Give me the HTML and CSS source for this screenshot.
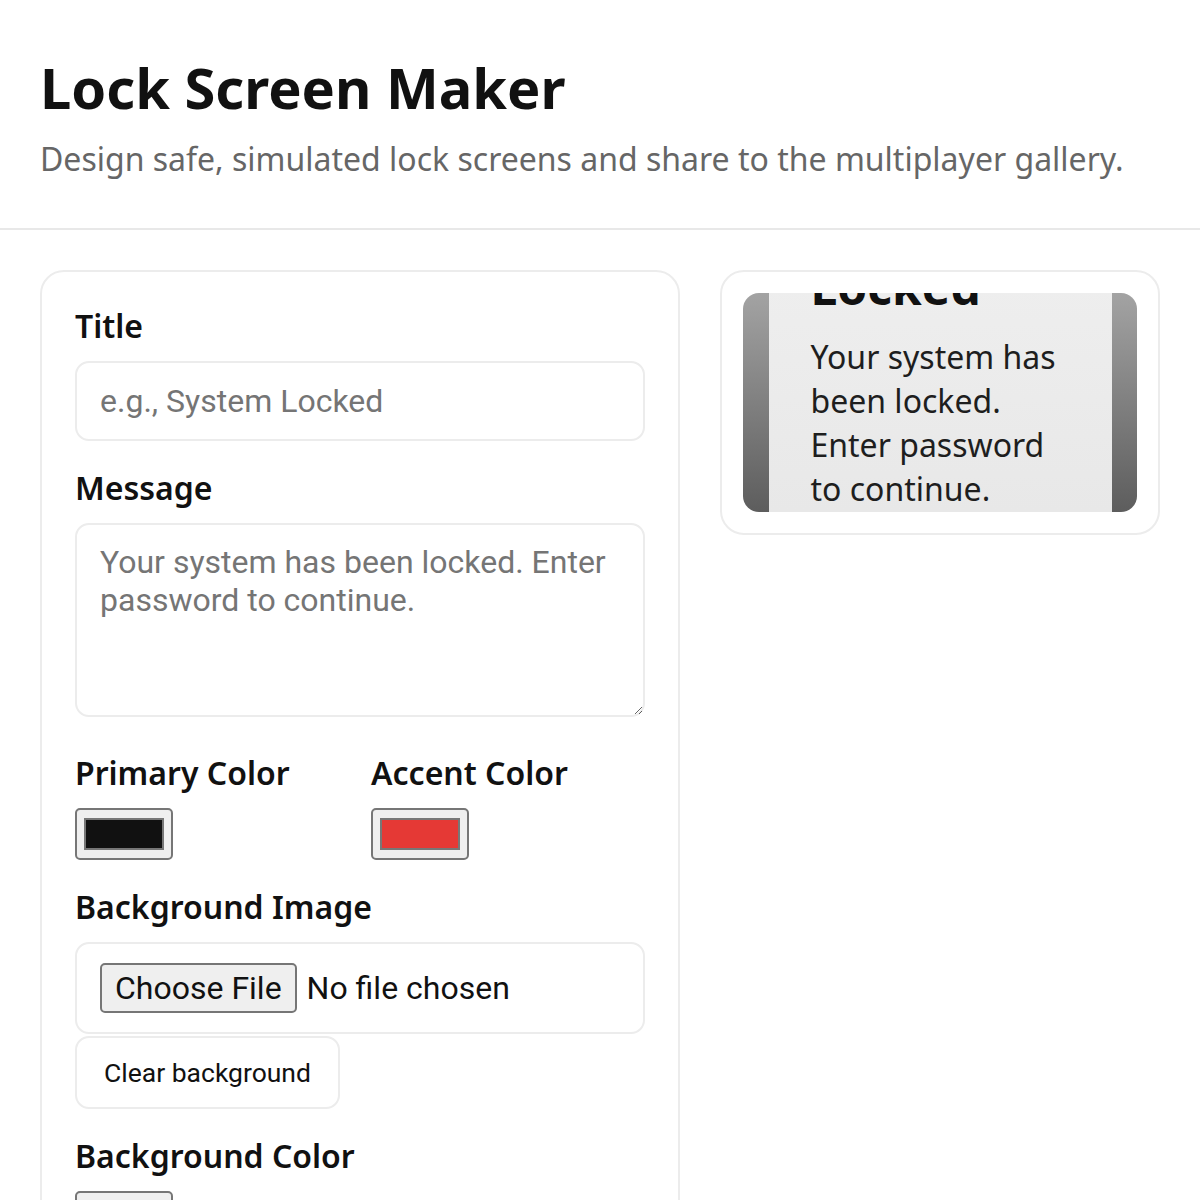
FILE: index.html
```html
<!DOCTYPE html>
<html lang="en">
<head>
<meta charset="utf-8">
<title>Lock Screen Maker</title>
<link rel="stylesheet" href="styles.css">
</head>
<body>
<header class="site-header">
  <h1 class="site-title">Lock Screen Maker</h1>
  <p class="site-subtitle">Design safe, simulated lock screens and share to the multiplayer gallery.</p>
</header>
<main class="layout">
  <section class="card editor">
    <div class="field">
      <label class="field-label" for="title">Title</label>
      <input class="text-input" id="title" type="text" placeholder="e.g., System Locked">
    </div>
    <div class="field">
      <label class="field-label" for="message">Message</label>
      <textarea class="text-area" id="message" placeholder="Your system has been locked. Enter password to continue."></textarea>
    </div>
    <div class="field color-row">
      <div class="color-field">
        <label class="field-label" for="primary">Primary Color</label>
        <input class="color-input" id="primary" type="color" value="#111111">
      </div>
      <div class="color-field">
        <label class="field-label" for="accent">Accent Color</label>
        <input class="color-input" id="accent" type="color" value="#e53935">
      </div>
    </div>
    <div class="field">
      <label class="field-label" for="bgimage">Background Image</label>
      <div class="file-box">
        <input class="file-input" id="bgimage" type="file" accept="image/*">
      </div>
      <button class="clear-btn" type="button">Clear background</button>
    </div>
    <div class="field">
      <label class="field-label" for="bgcolor">Background Color</label>
      <input class="color-input" id="bgcolor" type="color" value="#ffffff">
    </div>
  </section>
  <aside class="card preview-card">
    <div class="preview">
      <div class="preview-panel">
        <h2 class="preview-title">System Locked</h2>
        <p class="preview-message">Your system has been locked. Enter password to continue.</p>
      </div>
    </div>
  </aside>
</main>
</body>
</html>
```

FILE: styles.css
```css
* { box-sizing: border-box; }

html, body {
  margin: 0;
  padding: 0;
  background: #ffffff;
  color: #111111;
  font-family: "Noto Sans", "Open Sans", sans-serif;
}

.site-header {
  padding: 54px 40px 45px;
  border-bottom: 2px solid #e8e8e8;
}

.site-title {
  margin: 0;
  font-size: 56px;
  line-height: 1.2;
  font-weight: 700;
  color: #111111;
}

.site-subtitle {
  margin: 14px 0 0;
  font-size: 32px;
  line-height: 1.5;
  color: #666666;
}

.layout {
  display: grid;
  grid-template-columns: minmax(0, 1fr) 440px;
  gap: 40px;
  padding: 40px;
  align-items: start;
}

.card {
  border: 2px solid #ececec;
  border-radius: 24px;
  background: #ffffff;
  min-width: 0;
}

.editor {
  padding: 34px 33px 40px;
  display: flex;
  flex-direction: column;
  gap: 27px;
}

.field {
  display: flex;
  flex-direction: column;
  align-items: flex-start;
  min-width: 0;
}

.field-label {
  display: block;
  font-size: 32px;
  line-height: 40px;
  font-weight: 600;
  color: #111111;
  margin-bottom: 15px;
}

.text-input,
.text-area {
  width: 100%;
  min-width: 0;
  border: 2px solid #ececec;
  border-radius: 14px;
  background: #ffffff;
  font-family: Roboto, "Liberation Sans", sans-serif;
  font-size: 32px;
  color: #111111;
  outline: none;
}

.text-input {
  height: 80px;
  padding: 0 23px;
}

.text-area {
  display: block;
  height: 194px;
  padding: 18px 23px;
  line-height: 38px;
  resize: vertical;
  margin-bottom: 9px;
}

.text-input::placeholder,
.text-area::placeholder {
  color: #757575;
}

.color-row {
  display: grid;
  grid-template-columns: minmax(0, 1fr) minmax(0, 1fr);
  gap: 22px;
  align-items: start;
  width: 100%;
}

.color-field {
  display: flex;
  flex-direction: column;
  align-items: flex-start;
}

.color-input {
  -webkit-appearance: none;
  appearance: none;
  width: 98px;
  height: 52px;
  padding: 0;
  border: 2px solid #767676;
  border-radius: 5px;
  background: #efefef;
  cursor: pointer;
}

.color-input::-webkit-color-swatch-wrapper {
  padding: 8px 7px;
}

.color-input::-webkit-color-swatch {
  border: 2px solid #777777;
  border-radius: 0;
}

.file-box {
  width: 100%;
  min-width: 0;
  border: 2px solid #ececec;
  border-radius: 14px;
  padding: 19px 23px;
}

.file-input {
  display: block;
  width: 100%;
  font-family: Roboto, "Liberation Sans", sans-serif;
  font-size: 32px;
  color: #111111;
}

.file-input::file-selector-button {
  font-family: Roboto, "Liberation Sans", sans-serif;
  font-size: 32px;
  color: #111111;
  background: #efefef;
  border: 2px solid #767676;
  border-radius: 5px;
  padding: 4px 13px;
  margin-right: 10px;
}

.clear-btn {
  margin-top: 2px;
  font-family: Roboto, "Liberation Sans", sans-serif;
  font-size: 26.5px;
  color: #111111;
  background: #ffffff;
  border: 2px solid #ececec;
  border-radius: 14px;
  padding: 19px 27px;
  line-height: 1.17;
}

.preview-card {
  padding: 21px;
}

.preview {
  height: 219px;
  border-radius: 16px;
  overflow: hidden;
  display: flex;
  justify-content: center;
  align-items: flex-end;
  background: linear-gradient(180deg, #a3a3a3 0%, #5d5d5d 100%);
}

.preview-panel {
  flex: 0 0 343px;
  width: 343px;
  padding: 30px 42px 1px;
  background: linear-gradient(180deg, #f1f1f1 0%, #e8e8e8 100%);
}

.preview-title {
  margin: 0 0 20px;
  font-size: 48px;
  line-height: 1.2;
  font-weight: 700;
  color: #111111;
}

.preview-message {
  margin: 0;
  font-size: 32px;
  line-height: 44px;
  color: #1e1e1e;
}
```
